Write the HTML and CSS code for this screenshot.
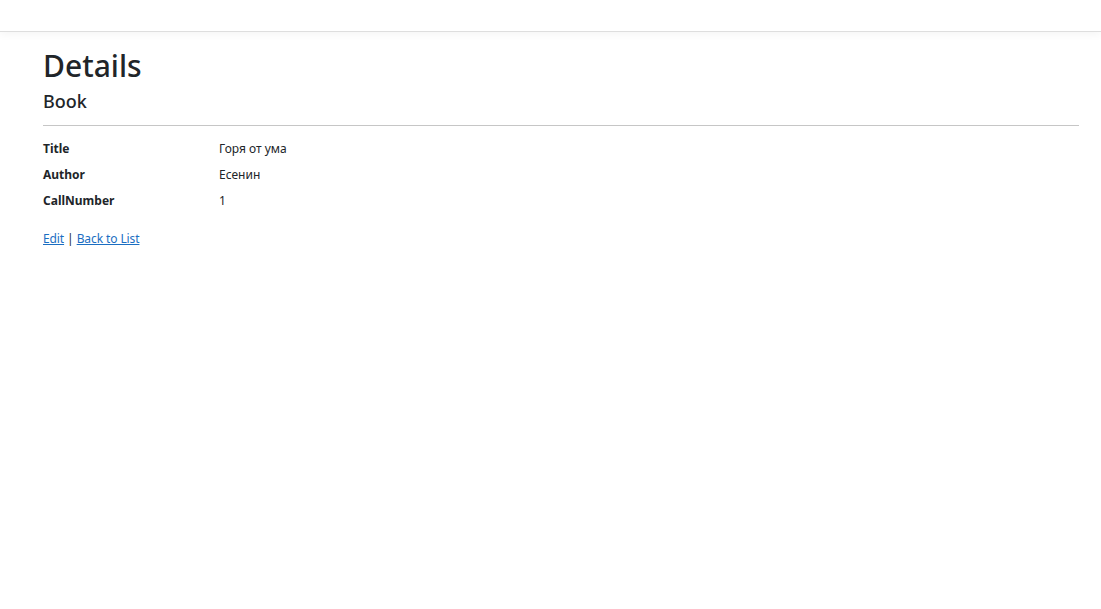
FILE: index.html
```html
<!DOCTYPE html>
<html lang="ru">
<head>
<meta charset="utf-8">
<title>Details</title>
<link rel="stylesheet" href="styles.css">
</head>
<body>
<header class="navbar"></header>
<main class="container">
  <h1 class="title">Details</h1>
  <div>
    <h4 class="subtitle">Book</h4>
    <hr class="rule">
    <dl class="details">
      <dt>Title</dt><dd>Горя от ума</dd>
      <dt>Author</dt><dd>Есенин</dd>
      <dt>CallNumber</dt><dd>1</dd>
    </dl>
  </div>
  <div class="actions">
    <a href="#">Edit</a> | <a href="#">Back to List</a>
  </div>
</main>
</body>
</html>
```
FILE: styles.css
```css
* { box-sizing: border-box; }
html, body { margin: 0; background: #fff; }
body {
  font-family: "Noto Sans", "Open Sans", sans-serif;
  font-size: 12px;
  line-height: 19.2px;
  color: #212529;
}
.navbar {
  height: 32px;
  border-bottom: 1px solid #dedede;
  box-shadow: 0 3px 8px rgba(0,0,0,0.04);
  background: #fff;
}
.container {
  padding: 0 22px 0 43px;
}
.title {
  margin: 15px 0 0;
  font-size: 30px;
  font-weight: 500;
  line-height: 38.4px;
}
.subtitle {
  margin: 5px 0 0;
  font-size: 18px;
  font-weight: 500;
  line-height: 23px;
}
.rule {
  margin: 12px 0 13px;
  border: 0;
  border-top: 1px solid #c6c6c6;
}
.details {
  display: grid;
  grid-template-columns: 176px 1fr;
  margin: 0 0 13px;
}
.details dt { font-weight: 700; margin: 0 0 6.4px; }
.details dd { margin: 0 0 6.4px; }
.actions { letter-spacing: -0.1px; }
.actions a { color: #1b6ec2; }
```
